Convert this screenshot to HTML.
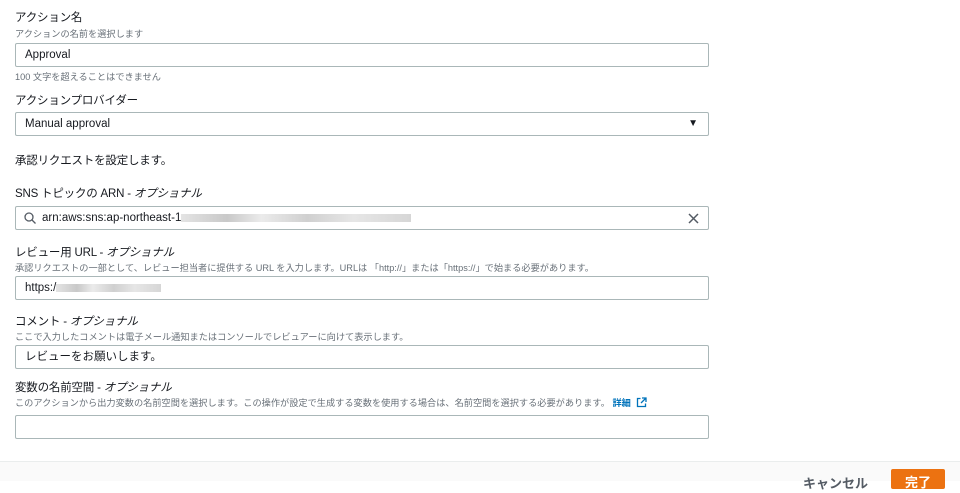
<!DOCTYPE html>
<html><head><meta charset="utf-8"><style>
*{box-sizing:border-box;margin:0;padding:0}
body{width:960px;height:481px;overflow:hidden;background:#fff;font-family:"Liberation Sans","Noto Sans CJK JP",sans-serif;color:#16191f;position:relative}
.a{position:absolute;white-space:nowrap}
.l{font-size:11.5px;color:#16191f;letter-spacing:-0.2px}
.l i{font-style:italic}
.h{font-size:9.2px;color:#687078}
.in{position:absolute;left:15px;width:694px;height:24px;border:1px solid #aab7b8;border-radius:2px;font-size:11.5px;padding-left:9px;line-height:22px;background:#fff}
.blur{display:inline-block;height:8px;background:linear-gradient(90deg,#ddd,#bbb 20%,#e6e6e6 35%,#c4c4c4 55%,#e0e0e0 75%,#ccc);vertical-align:middle;opacity:.8}
</style></head><body>
<div class="a l" style="left:15px;top:9px">アクション名</div>
<div class="a h" style="left:15px;top:26px">アクションの名前を選択します</div>
<div class="in" style="top:43px">Approval</div>
<div class="a h" style="left:15px;top:69px">100 文字を超えることはできません</div>
<div class="a l" style="left:15px;top:92px">アクションプロバイダー</div>
<div class="in" style="top:112px">Manual approval<span style="position:absolute;right:10px;top:0;font-size:10px">▼</span></div>
<div class="a l" style="left:15px;top:152px">承認リクエストを設定します。</div>
<div class="a l" style="left:15px;top:185px">SNS トピックの ARN - <i>オプショナル</i></div>
<div class="in" style="top:206px;padding-left:26px">
<svg style="position:absolute;left:8px;top:5px" width="12" height="12" viewBox="0 0 12 12"><circle cx="5" cy="5" r="4" fill="none" stroke="#545b64" stroke-width="1.3"/><path d="M8 8l3.5 3.5" stroke="#545b64" stroke-width="1.3"/></svg>
arn:aws:sns:ap-northeast-1<span class="blur" style="width:230px"></span>
<svg style="position:absolute;right:9px;top:6px" width="11" height="11" viewBox="0 0 11 11"><path d="M1 1l9 9M10 1l-9 9" stroke="#545b64" stroke-width="1.5"/></svg></div>
<div class="a l" style="left:15px;top:244px">レビュー用 URL - <i>オプショナル</i></div>
<div class="a h" style="left:15px;top:260px">承認リクエストの一部として、レビュー担当者に提供する URL を入力します。URLは 「http://」または「https://」で始まる必要があります。</div>
<div class="in" style="top:276px">https:/<span class="blur" style="width:105px"></span></div>
<div class="a l" style="left:15px;top:313px">コメント - <i>オプショナル</i></div>
<div class="a h" style="left:15px;top:329px">ここで入力したコメントは電子メール通知またはコンソールでレビュアーに向けて表示します。</div>
<div class="in" style="top:345px">レビューをお願いします。</div>
<div class="a l" style="left:15px;top:379px">変数の名前空間 - <i>オプショナル</i></div>
<div class="a h" style="left:15px;top:395px">このアクションから出力変数の名前空間を選択します。この操作が設定で生成する変数を使用する場合は、名前空間を選択する必要があります。 <b style="color:#0073bb">詳細</b>
<svg style="vertical-align:-2px;margin-left:3px" width="11" height="11" viewBox="0 0 11 11"><path d="M4.5 1.5H1.5v8h8v-3M6 1h4v4M10 1L5 6" fill="none" stroke="#0073bb" stroke-width="1.3"/></svg></div>
<div class="in" style="top:415px"></div>
<div class="a" style="left:0;top:461px;width:960px;height:20px;background:#fafafa;border-top:1px solid #eaeded"></div>
<div class="a" style="left:803px;top:473px;font-size:13px;font-weight:bold;color:#545b64">キャンセル</div>
<div class="a" style="left:891px;top:469px;width:54px;height:20px;background:#ec7211;border-radius:2px;color:#fff;font-size:13px;font-weight:bold;text-align:center;line-height:20px;padding-top:4px">完了</div>
</body></html>
